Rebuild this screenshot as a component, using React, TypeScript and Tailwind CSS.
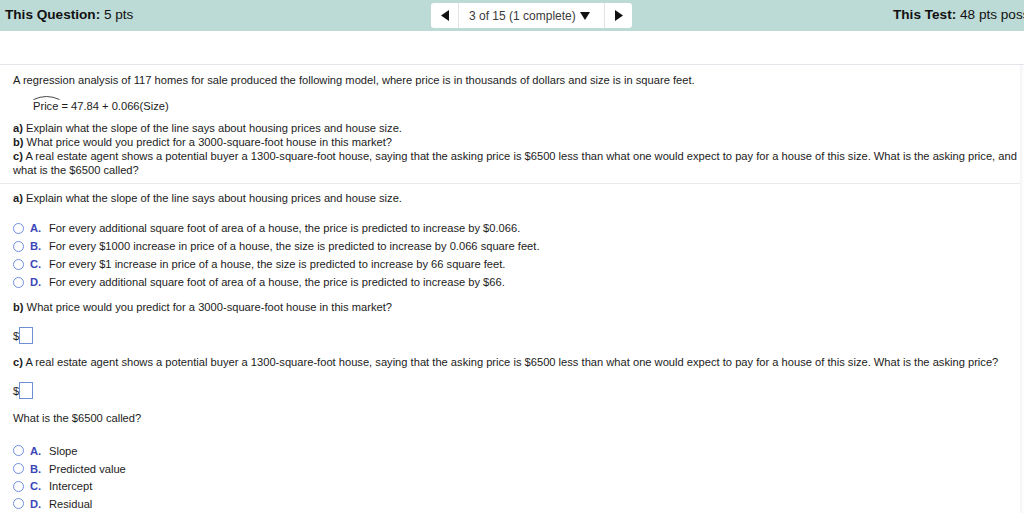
import React from "react";

const font = { fontFamily: '"Liberation Sans", Arial, sans-serif' };

type Opt = { letter: string; text: string };

const slopeOptions: Opt[] = [
  { letter: "A.", text: "For every additional square foot of area of a house, the price is predicted to increase by $0.066." },
  { letter: "B.", text: "For every $1000 increase in price of a house, the size is predicted to increase by 0.066 square feet." },
  { letter: "C.", text: "For every $1 increase in price of a house, the size is predicted to increase by 66 square feet." },
  { letter: "D.", text: "For every additional square foot of area of a house, the price is predicted to increase by $66." },
];

const nameOptions: Opt[] = [
  { letter: "A.", text: "Slope" },
  { letter: "B.", text: "Predicted value" },
  { letter: "C.", text: "Intercept" },
  { letter: "D.", text: "Residual" },
];

function Radio() {
  return <span className="inline-block w-[11px] h-[11px] rounded-full border-[1.5px] border-[#6f8fe0] bg-white shrink-0" />;
}

function Choices({ items, row }: { items: Opt[]; row: string }) {
  return (
    <div className="flex flex-col">
      {items.map((o) => (
        <div key={o.letter} className={"flex items-center " + row}>
          <Radio />
          <span className="ml-[6px] w-[19px] font-bold text-[#3a46b8]">{o.letter}</span>
          <span>{o.text}</span>
        </div>
      ))}
    </div>
  );
}

function AnswerBox() {
  return (
    <div className="flex items-center">
      <span>$</span>
      <span className="inline-block w-[14px] h-[17px] border border-[#6d8fd3] bg-white" />
    </div>
  );
}

export default function App() {
  return (
    <div className="w-[1024px] h-[517px] overflow-hidden bg-white text-[#1c1c1c]" style={font}>
      {/* top bar */}
      <div className="h-[31px] bg-[#bcdad6] flex items-center overflow-hidden whitespace-nowrap text-[13.6px] text-[#111]">
        <div className="w-[431px] shrink-0 pl-[5px]">
          <b>This Question:</b> 5 pts
        </div>
        <div className="w-[201px] h-[25px] shrink-0 flex bg-white rounded-[3px] text-[12px] text-[#3a3a3a]">
          <div className="w-[28px] flex items-center justify-center border-r border-[#e4e4e4]">
            <svg width="8" height="11" viewBox="0 0 8 11"><path d="M8 0 L0 5.5 L8 11 Z" fill="#111" /></svg>
          </div>
          <div className="w-[146px] flex items-center pl-[10px] border-r border-[#e4e4e4]">
            3 of 15 (1 complete)
            <svg className="ml-[4px]" width="10" height="8" viewBox="0 0 10 8"><path d="M0 0 L10 0 L5 8 Z" fill="#111" /></svg>
          </div>
          <div className="flex-1 flex items-center justify-center">
            <svg width="8" height="11" viewBox="0 0 8 11"><path d="M0 0 L8 5.5 L0 11 Z" fill="#111" /></svg>
          </div>
        </div>
        <div className="shrink-0 pl-[261px]">
          <b>This Test:</b> 48 pts possible
        </div>
      </div>

      <div className="h-[34px] border-b border-[#e3e5ea]" />

      {/* question body */}
      <div className="relative text-[11.15px] leading-[14px]">
        <div className="absolute right-0 top-0 bottom-0 w-[4px] bg-gradient-to-r from-[#f3f3f5] to-white" />
        <div className="pl-[13px] pr-[3px] pt-[8px]">
          <p>
            A regression analysis of 117 homes for sale produced the following model, where price is in thousands of
            dollars and size is in square feet.
          </p>
          <p className="mt-[12px] pl-[20px]">
            <span className="relative inline-block">
              <svg className="absolute left-0 -top-[4px]" width="27" height="5" viewBox="0 0 27 5">
                <path d="M0.5 4.5 Q13.5 -1.5 26.5 4.5" fill="none" stroke="#333" strokeWidth="0.9" />
              </svg>
              Price
            </span>{" "}
            = 47.84 + 0.066(Size)
          </p>
          <div className="mt-[8px]">
            <p>
              <b>a)</b> Explain what the slope of the line says about housing prices and house size.
            </p>
            <p>
              <b>b)</b> What price would you predict for a 3000-square-foot house in this market?
            </p>
            <p>
              <b>c)</b> A real estate agent shows a potential buyer a 1300-square-foot house, saying that the asking price
              is $6500 less than what one would expect to pay for a house of this size. What is the asking price, and
              what is the $6500 called?
            </p>
          </div>
        </div>

        <div className="mt-[6px] border-t border-[#ebebef]" />

        <div className="pl-[13px] pt-[7px]">
          <p>
            <b>a)</b> Explain what the slope of the line says about housing prices and house size.
          </p>
          <div className="mt-[14px]">
            <Choices items={slopeOptions} row="h-[18px]" />
          </div>
          <p className="mt-[9px]">
            <b>b)</b> What price would you predict for a 3000-square-foot house in this market?
          </p>
          <div className="mt-[13px]">
            <AnswerBox />
          </div>
          <p className="mt-[11px]">
            <b>c)</b> A real estate agent shows a potential buyer a 1300-square-foot house, saying that the asking price is
            $6500 less than what one would expect to pay for a house of this size. What is the asking price?
          </p>
          <div className="mt-[13px]">
            <AnswerBox />
          </div>
          <p className="mt-[12px]">What is the $6500 called?</p>
          <div className="mt-[17px]">
            <Choices items={nameOptions} row="h-[17.7px]" />
          </div>
        </div>
      </div>
    </div>
  );
}
